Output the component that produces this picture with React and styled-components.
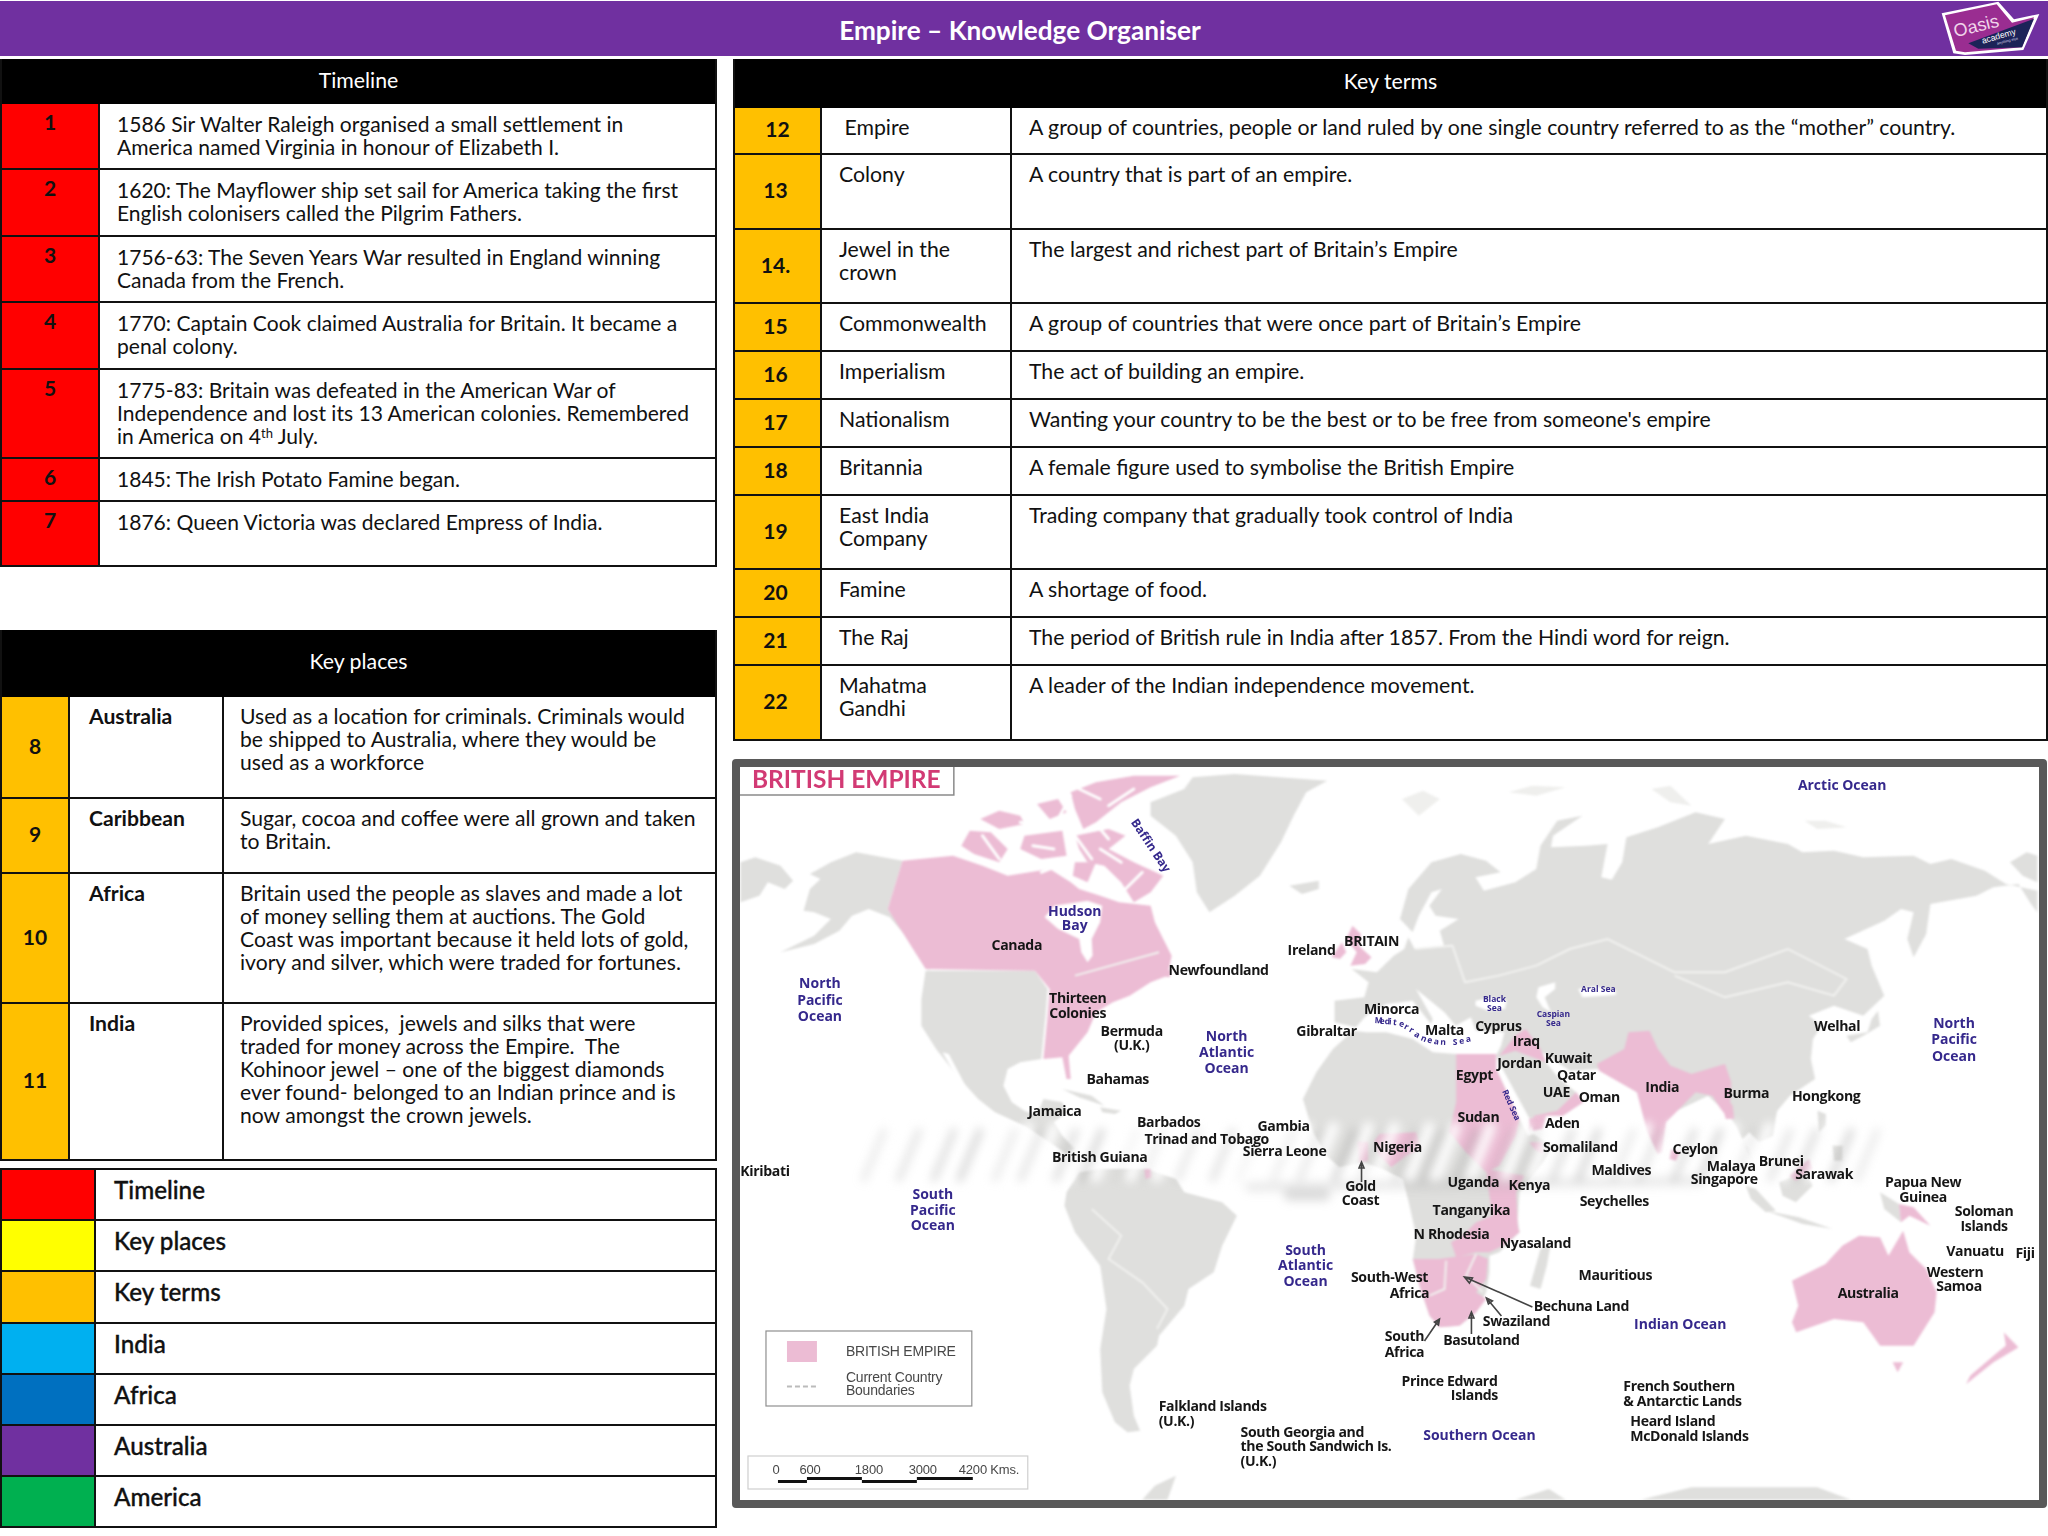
import React from 'react';
import styled, { createGlobalStyle } from 'styled-components';

const Global = createGlobalStyle`
  html, body { margin: 0; padding: 0; background: #fff; }
  body { font-family: Lato, "Noto Sans", sans-serif; color: #111; width: 2048px; height: 1536px; overflow: hidden; }
  * { box-sizing: border-box; }
`;

const Page = styled.div`
  width: 2048px;
  padding-top: 1px;
`;
const TitleBar = styled.header`
  position: relative;
  height: 55px;
  background: #7030a0;
  color: #fff;
  display: flex;
  align-items: center;
  justify-content: center;
  padding: 3px 8px 0 0;
`;
const Title = styled.h1`
  margin: 0;
  font-size: 26.2px;
  font-weight: 700;
`;
const LogoMark = styled.svg`
  position: absolute;
  left: 1940px;
  top: -1px;
  width: 100px;
  height: 57px;
`;
const Columns = styled.main`
  display: grid;
  grid-template-columns: 717px 1315px;
  column-gap: 16px;
  padding-top: 3px;
`;
const Stack = styled.div`
  display: flex;
  flex-direction: column;
`;
const Table = styled.section`
  border-left: 2px solid #111;
  border-right: 2px solid #111;
  margin-bottom: ${p => p.$bottom || 0}px;
`;
const TableHead = styled.div`
  height: ${p => p.$h}px;
  background: #000;
  color: #fff;
  font-size: 21.3px;
  display: flex;
  align-items: center;
  justify-content: center;
  padding-bottom: ${p => p.$shift || 0}px;
`;
const Row = styled.div`
  display: grid;
  grid-template-columns: ${p => p.$cols};
  height: ${p => p.$h}px;
  border-bottom: 2px solid #111;
`;
const Num = styled.div`
  background: ${p => p.$bg};
  font-weight: 700;
  font-size: 21px;
  line-height: 23px;
  display: flex;
  justify-content: center;
  align-items: ${p => (p.$top ? 'flex-start' : 'center')};
  padding-top: ${p => (p.$top ? 6 : 0)}px;
  padding-bottom: ${p => (p.$top ? 0 : 4)}px;
  padding-right: ${p => p.$pr || 0}px;
`;
const Cell = styled.div`
  border-left: 2px solid #111;
  padding: 8px 0 0 ${p => p.$pl ?? 17}px;
  font-size: ${p => p.$fs}px;
  line-height: 23px;
  font-weight: ${p => (p.$bold ? 700 : 400)};
  white-space: pre-wrap;
  sup { font-size: 13px; line-height: 0; vertical-align: 6px; }
`;
const LegendTable = styled(Table)`
  border-top: 2px solid #111;
`;
const LegendSwatch = styled.div`
  background: ${p => p.$bg};
`;
const LegendName = styled.div`
  border-left: 2px solid #111;
  padding: 5px 0 0 18px;
  font-size: 24.2px;
  line-height: 29px;
  font-weight: 500;
  -webkit-text-stroke: 0.35px #111;
`;
const MapFrame = styled.figure`
  margin: 18px 1px 0 -1px;
  height: 749px;
  border: 8px solid #595959;
  border-radius: 4px;
  background: #fff;
  overflow: hidden;
`;
const MapSvg = styled.svg`
  display: block;
  width: 100%;
  height: 100%;
`;
const LandLayer = styled.g`
  filter: blur(0.9px);
`;
const HazeLayer = styled.g`
  filter: blur(5px);
`;
const LabelLayer = styled.g`
  filter: blur(0.35px);
`;
const Shape = styled.path`
  fill: ${p => ({ land: '#dfdfdd', faint: '#efefed', brit: '#ecbcd4', sea: '#ffffff' }[p.$kind])};
`;
const Border = styled.path`
  fill: none;
  stroke: #f2f2f0;
  stroke-width: 2;
  vector-effect: non-scaling-stroke;
`;
const Channel = styled.path`
  fill: none;
  stroke: #fff;
  stroke-width: 3;
  stroke-linecap: round;
  vector-effect: non-scaling-stroke;
`;
const Smear = styled.line`
  stroke: ${p => p.$c};
  stroke-width: ${p => p.$w};
  stroke-linecap: round;
  opacity: ${p => p.$o};
`;
const Leader = styled.path`
  fill: none;
  stroke: #444;
  stroke-width: 1.6;
`;
const BoundaryKey = styled.path`
  fill: none;
  stroke: #bbb;
  stroke-width: 2;
  stroke-dasharray: 5 3;
`;
const Label = styled.text`
  font-family: "Open Sans", "Noto Sans", sans-serif;
  font-weight: 700;
  font-size: ${p => ({ place: 14.1, sea: 14, bay: 12, tiny: 8.5 }[p.$kind])}px;
  fill: ${p => (p.$kind === 'place' ? '#161616' : '#35288c')};
  text-anchor: ${p => p.$anchor || 'middle'};
  letter-spacing: ${p => (p.$kind === 'place' ? -0.35 : 0)}px;
`;
const MapTitleBox = styled.rect`
  fill: #fff;
  stroke: #8a8a8a;
  stroke-width: 1.5;
`;
const MapTitle = styled.text`
  font-family: Lato, sans-serif;
  font-weight: 700;
  font-size: 24.5px;
  fill: #d23a74;
`;
const InsetBox = styled.rect`
  fill: #fff;
  stroke: ${p => p.$c};
  stroke-width: 1.2;
`;
const InsetText = styled.text`
  font-family: "Liberation Sans", Arial, sans-serif;
  font-size: ${p => p.$s || 14}px;
  fill: #484848;
  text-anchor: ${p => p.$anchor || 'start'};
  letter-spacing: -0.2px;
`;
const LogoText = styled.text`
  font-family: "Liberation Sans", Arial, sans-serif;
  fill: ${p => p.$c};
  font-size: ${p => p.$s}px;
`;

const TIMELINE = [
  [1, 66, <>1586 Sir Walter Raleigh organised a small settlement in{'\n'}America named Virginia in honour of Elizabeth I.</>],
  [2, 67, <>1620: The Mayflower ship set sail for America taking the first{'\n'}English colonisers called the Pilgrim Fathers.</>],
  [3, 66, <>1756-63: The Seven Years War resulted in England winning{'\n'}Canada from the French.</>],
  [4, 67, <>1770: Captain Cook claimed Australia for Britain. It became a{'\n'}penal colony.</>],
  [5, 89, <>1775-83: Britain was defeated in the American War of{'\n'}Independence and lost its 13 American colonies. Remembered{'\n'}in America on 4<sup>th</sup> July.</>],
  [6, 43, <>1845: The Irish Potato Famine began.</>],
  [7, 65, <>1876: Queen Victoria was declared Empress of India.</>],
];
const PLACES = [
  [8, 102, 'Australia', 'Used as a location for criminals. Criminals would\nbe shipped to Australia, where they would be\nused as a workforce'],
  [9, 75, 'Caribbean', 'Sugar, cocoa and coffee were all grown and taken\nto Britain.'],
  [10, 130, 'Africa', 'Britain used the people as slaves and made a lot\nof money selling them at auctions. The Gold\nCoast was important because it held lots of gold,\nivory and silver, which were traded for fortunes.'],
  [11, 157, 'India', 'Provided spices,  jewels and silks that were\ntraded for money across the Empire.  The\nKohinoor jewel – one of the biggest diamonds\never found- belonged to an Indian prince and is\nnow amongst the crown jewels.'],
];
const LEGEND = [
  ['#ff0000', 'Timeline'], ['#ffff00', 'Key places'], ['#ffc000', 'Key terms'], ['#00b0f0', 'India'],
  ['#0070c0', 'Africa'], ['#7030a0', 'Australia'], ['#00b050', 'America'],
];
const TERMS = [
  ['12', 47, '\u00A0Empire', 'A group of countries, people or land ruled by one single country referred to as the “mother” country.'],
  ['13', 75, 'Colony', 'A country that is part of an empire.'],
  ['14.', 74, 'Jewel in the\ncrown', 'The largest and richest part of Britain’s Empire'],
  ['15', 48, 'Commonwealth', 'A group of countries that were once part of Britain’s Empire'],
  ['16', 48, 'Imperialism', 'The act of building an empire.'],
  ['17', 48, 'Nationalism', "Wanting your country to be the best or to be free from someone's empire"],
  ['18', 48, 'Britannia', 'A female figure used to symbolise the British Empire'],
  ['19', 74, 'East India\nCompany', 'Trading company that gradually took control of India'],
  ['20', 48, 'Famine', 'A shortage of food.'],
  ['21', 48, 'The Raj', 'The period of British rule in India after 1857. From the Hindi word for reign.'],
  ['22', 75, 'Mahatma\nGandhi', 'A leader of the Indian independence movement.'],
];

const FRAMES = {
  z3: 'translate(730 750) scale(.4209 .3333)',
  z4: 'translate(1390 750) scale(.4196 .3333)',
  z5: 'translate(730 1150) scale(.4209 .3333)',
  z6: 'translate(1390 1150) scale(.4196 .3333)',
  z8: 'translate(1200 960) scale(.3333)',
  z9: 'translate(1600 1040) scale(.3333)',
};
const poly = s => 'M' + s.trim().split(/\s+/).join('L') + 'Z';
const SHAPES = [
  // faint arctic islands
  ['z4', 'faint', '30,150 80,125 120,150 70,200'],
  ['z4', 'faint', '285,130 340,110 420,115 350,140'],
  ['z4', 'faint', '625,120 670,110 720,170 670,160'],
  ['z4', 'faint', '990,215 1040,215 1090,235 1020,240'],
  // land
  ['z3', 'land', '25,340 60,325 120,350 150,395 130,420 90,400 70,440 25,460'],
  ['z3', 'land', '175,485 190,420 215,390 190,375 240,340 300,310 345,320 410,335 375,480 420,560 470,650 480,680 455,620 410,550 380,505 330,480 290,500 260,545 200,585 120,610 200,560 240,510 200,490'],
  ['z3', 'land', '465,665 725,665 755,720 750,800 740,930 690,940 660,960 650,1010 670,1060 700,1085 730,1100 745,1050 790,1060 800,1090 770,1120 790,1160 820,1200 800,1215 760,1180 700,1130 630,1090 590,1050 540,980 490,900 455,830 455,750'],
  ['z3', 'land', '790,1020 860,1040 890,1070 830,1045'],
  ['z3', 'land', '880,1075 930,1085 915,1095 885,1090'],
  ['z3', 'land', '1000,160 1080,120 1100,85 1200,75 1420,95 1370,130 1340,200 1310,280 1260,380 1200,440 1140,490 1110,430 1100,340 1060,260 1000,200'],
  ['z3', 'land', '1330,410 1400,395 1400,420 1360,435'],
  ['z4', 'land', '-131,755 -60,745 -50,700 -90,660 -30,670 10,620 35,600 45,565 60,600 130,590 120,545 165,510 110,500 95,470 125,420 100,430 70,500 55,550 25,510 45,420 100,340 170,315 230,335 265,370 205,385 225,425 300,400 350,360 360,290 400,215 460,200 390,260 385,295 470,290 520,285 505,385 530,392 555,340 565,265 640,235 730,190 800,210 760,285 850,260 950,285 985,310 1060,305 1130,325 1250,320 1290,345 1340,330 1420,365 1470,405 1545,425 1545,490 1530,465 1500,405 1440,415 1400,440 1290,465 1280,555 1250,625 1235,570 1250,490 1220,480 1180,515 1085,570 1140,600 1150,650 1180,740 1130,800 1060,770 1000,800 1030,830 1010,870 1005,930 1015,990 955,1040 925,1085 922,1100 914,1160 882,1180 858,1150 842,1170 874,1260 854,1200 826,1130 810,1100 760,1040 660,1100 640,1100 590,1030 500,960 430,965 365,910 373,940 405,990 445,1030 460,1060 413,1100 373,1100 333,1110 345,1135 272,965 254,920 266,890 274,850 206,845 194,805 158,830 131,790 63,720 103,810 99,825 55,755 -8,765 -56,800 -80,835 -131,820'],
  ['z4', 'land', '1480,340 1520,310 1545,320 1545,400 1510,380'],
  ['z4', 'land', '1165,785 1170,830 1130,860 1100,880 1090,860 1140,850 1150,810'],
  ['z4', 'land', '1120,640 1135,650 1145,700 1130,690'],
  ['z8', 'land', '460,215 500,220 560,220 640,240 700,280 770,285 890,285 890,330 965,490 985,530 1000,525 1060,560 1030,610 960,700 955,780 960,820 900,880 870,890 870,940 860,1000 830,1060 780,1100 720,1105 690,1070 660,980 640,900 650,830 630,740 610,660 550,630 490,610 420,625 380,590 340,520 310,420 350,340 400,270'],
  ['z6', 'land', '360,300 385,280 375,350 360,420 335,410'],
  ['z5', 'land', '800,130 830,70 880,60 990,60 1060,90 1080,130 1170,160 1205,200 1170,290 1150,370 1090,420 1080,470 1020,560 1015,590 960,660 950,710 960,800 975,845 945,850 915,820 885,730 880,600 895,480 880,350 820,250 795,170'],
  ['z5', 'land', '980,1052 1010,1010 1060,980 1040,1052'],
  ['z6', 'land', '300,1052 380,1020 420,1052'],
  ['z6', 'land', '600,1052 720,1015 1020,1015 1100,1052'],
  ['z9', 'land', '655,215 680,225 680,260 660,280'],
  ['z9', 'land', '700,320 730,320 730,365 705,365'],
  ['z9', 'land', '540,430 620,395 640,440 590,490 550,470'],
  ['z9', 'land', '440,440 470,450 530,515 500,520 455,480'],
  ['z9', 'land', '500,515 600,535 700,570 610,555'],
  ['z6', 'land', '1170,130 1215,165 1220,220 1180,180'],
  // British Empire
  ['z3', 'brit', '410,335 375,480 465,660 725,665 760,720 755,800 745,930 790,925 800,990 810,990 805,920 850,850 870,790 910,760 950,740 1000,700 1040,680 1050,620 1010,520 1000,470 925,460 880,440 830,420 810,400 760,360 660,380 600,350 530,320'],
  ['z3', 'brit', '550,290 570,245 620,250 660,300 640,340 580,315'],
  ['z3', 'brit', '595,210 640,185 690,200 700,225 640,240'],
  ['z3', 'brit', '730,165 780,150 800,190 760,210'],
  ['z3', 'brit', '810,130 870,100 960,80 1070,80 1000,115 930,160 870,220 840,240 820,180'],
  ['z3', 'brit', '820,260 900,240 940,260 900,300 960,340 1030,380 1000,430 960,460 930,400 890,350 850,340 830,300'],
  ['z3', 'brit', '700,260 790,245 800,320 740,330 690,300'],
  ['z3', 'brit', '820,340 870,340 850,400 815,380'],
  ['z3', 'brit', '1480,530 1500,555 1495,590 1525,625 1510,645 1475,650 1490,610 1465,570'],
  ['z3', 'brit', '1430,625 1455,580 1465,610 1450,630'],
  ['z3', 'brit', '1020,680 1050,660 1045,685'],
  ['z4', 'brit', '495,945 560,900 570,850 620,845 640,900 670,950 720,975 760,960 800,945 815,1000 810,1110 790,1080 770,1040 730,1030 660,1120 650,1210 640,1215 615,1150 590,1030 500,965'],
  ['z4', 'brit', '262,920 300,860 325,840 360,900 373,940 300,905'],
  ['z4', 'brit', '445,1030 462,1060 413,1100 373,1100 333,1110 333,1150 345,1100 400,1085'],
  ['z8', 'brit', '770,285 890,285 890,330 960,480 950,530 900,620 860,640 800,580 750,520 770,430'],
  ['z8', 'brit', '990,480 1040,470 1030,510 1000,515'],
  ['z8', 'brit', '990,550 1030,550 1030,585 1005,570'],
  ['z8', 'brit', '540,525 650,520 665,570 620,590 575,625 540,590 525,545'],
  ['z8', 'brit', '475,548 505,548 505,605 478,610'],
  ['z8', 'brit', '860,630 975,650 950,700 955,800 960,820 910,860 830,790 880,770 870,710'],
  ['z8', 'brit', '830,790 910,860 870,880 830,880 770,895 755,850 790,830'],
  ['z8', 'brit', '640,900 720,900 830,885 865,900 860,960 830,1000 860,1020 830,1060 780,1100 720,1105 690,1070 660,980'],
  ['z5', 'brit', '985,60 1000,60 1002,85 988,90'],
  ['z6', 'brit', '960,395 1040,345 1080,290 1120,260 1170,265 1190,320 1225,245 1240,310 1280,360 1305,430 1300,490 1250,590 1170,590 1130,520 1060,510 970,550 960,520 975,470'],
  ['z6', 'brit', '1200,640 1225,640 1212,670'],
  ['z6', 'brit', '1465,550 1500,595 1440,640 1375,705 1385,680 1450,610 1470,590'],
  ['z6', 'brit', '1215,165 1250,175 1290,230 1240,200 1220,220'],
  ['z9', 'brit', '375,165 400,200 405,240 380,240 365,190'],
  ['z9', 'brit', '570,410 630,360 640,390 590,425'],
  ['z9', 'brit', '215,330 240,340 230,365 210,360'],
  // water
  ['z3', 'sea', '748,505 770,470 850,455 885,470 880,520 860,570 862,620 850,640 835,610 830,570 780,540'],
  ['z3', 'sea', '505,910 520,915 560,1010 545,1000'],
  ['z4', 'sea', '205,755 245,745 280,755 275,780 235,785 205,770'],
  ['z4', 'sea', '355,715 395,700 395,720 370,745 385,790 365,775 350,745'],
  ['z4', 'sea', '450,720 490,712 540,725 540,738 460,745'],
];
const BORDERS = [
  ['z4', 'M350,650 L430,600 520,570 600,620 680,670 800,670 950,600 1090,690 1060,740 950,700 800,745 680,680'],
  ['z4', 'M60,600 L150,590 180,700 260,680 350,650'],
  ['z5', 'M860,180 L930,260 900,330 980,400 1040,480 1015,540'],
  ['z8', 'M740,905 L735,990 690,1010'],
  ['z8', 'M830,885 L800,950 850,1000'],
  ['z3', 'M820,680 L1020,610'],
];
const CHANNELS = 'M600,260 L640,330 M690,220 L760,240 M820,200 L800,240 M880,150 L830,120 M900,270 L880,240 M930,340 L880,300 M820,260 L860,330 M780,210 L810,140 M960,120 L900,170 M720,290 L770,300 M740,370 L800,340 M980,370 L940,420';
const LABELS = [
  ['Canada', 1017, 951], ['Ireland', 1312, 956], ['BRITAIN', 1372, 947], ['Newfoundland', 1219, 976],
  ['Thirteen', 1078, 1004], ['Colonies', 1078, 1019], ['Bermuda', 1132, 1037], ['(U.K.)', 1132, 1051],
  ['Gibraltar', 1327, 1037], ['Bahamas', 1118, 1085], ['Jamaica', 1055, 1117], ['Barbados', 1169, 1128],
  ['Gambia', 1284, 1132], ['Trinad and Tobago', 1207, 1145], ['Sierra Leone', 1285, 1157], ['British Guiana', 1100, 1163],
  ['Kiribati', 765, 1177], ['Gold', 1361, 1192], ['Coast', 1361, 1206], ['Nigeria', 1398, 1153],
  ['Minorca', 1392, 1015], ['Malta', 1445, 1036], ['Cyprus', 1499, 1032], ['Iraq', 1527, 1047], ['Jordan', 1520, 1069],
  ['Kuwait', 1569, 1064], ['Qatar', 1577, 1081], ['Egypt', 1475, 1081], ['UAE', 1557, 1098], ['Oman', 1600, 1103],
  ['Sudan', 1479, 1123], ['Aden', 1563, 1129], ['Somaliland', 1581, 1153], ['Uganda', 1474, 1188], ['Kenya', 1530, 1191],
  ['Tanganyika', 1472, 1216], ['N Rhodesia', 1452, 1240], ['Nyasaland', 1536, 1249], ['South-West', 1390, 1283], ['Africa', 1410, 1299],
  ['Bechuna Land', 1582, 1312], ['Swaziland', 1517, 1327], ['South', 1405, 1342], ['Africa', 1405, 1358], ['Basutoland', 1482, 1346],
  ['Maldives', 1622, 1176], ['Seychelles', 1615, 1207], ['Mauritious', 1616, 1281], ['Prince Edward', 1450, 1387], ['Islands', 1475, 1401],
  ['India', 1663, 1093], ['Burma', 1747, 1099], ['Hongkong', 1827, 1102], ['Welhal', 1838, 1032], ['Ceylon', 1696, 1155],
  ['Malaya', 1732, 1172], ['Singapore', 1725, 1185], ['Brunei', 1782, 1167], ['Sarawak', 1825, 1180], ['Papua New', 1924, 1188], ['Guinea', 1924, 1203],
  ['Soloman', 1985, 1217], ['Islands', 1985, 1232], ['Vanuatu', 1976, 1257], ['Fiji', 2026, 1259], ['Western', 1956, 1278], ['Samoa', 1960, 1292], ['Australia', 1869, 1299],
  ['French Southern', 1624, 1392, 'place', 'start'], ['& Antarctic Lands', 1624, 1407, 'place', 'start'],
  ['Heard Island', 1631, 1427, 'place', 'start'], ['McDonald Islands', 1631, 1442, 'place', 'start'],
  ['Falkland Islands', 1159, 1412, 'place', 'start'], ['(U.K.)', 1159, 1427, 'place', 'start'],
  ['South Georgia and', 1241, 1438, 'place', 'start'], ['the South Sandwich Is.', 1241, 1452, 'place', 'start'], ['(U.K.)', 1241, 1467, 'place', 'start'],
  ['Hudson', 1075, 917, 'sea'], ['Bay', 1075, 931, 'sea'], ['North', 820, 989, 'sea'], ['Pacific', 820, 1006, 'sea'], ['Ocean', 820, 1022, 'sea'],
  ['North', 1227, 1042, 'sea'], ['Atlantic', 1227, 1058, 'sea'], ['Ocean', 1227, 1074, 'sea'],
  ['South', 933, 1200, 'sea'], ['Pacific', 933, 1216, 'sea'], ['Ocean', 933, 1231, 'sea'],
  ['South', 1306, 1256, 'sea'], ['Atlantic', 1306, 1271, 'sea'], ['Ocean', 1306, 1287, 'sea'],
  ['North', 1955, 1029, 'sea'], ['Pacific', 1955, 1045, 'sea'], ['Ocean', 1955, 1062, 'sea'],
  ['Arctic Ocean', 1843, 791, 'sea'], ['Indian Ocean', 1681, 1330, 'sea'], ['Southern Ocean', 1480, 1441, 'sea'],
  ['Black', 1495, 1003, 'tiny'], ['Sea', 1495, 1012, 'tiny'], ['Caspian', 1554, 1018, 'tiny'], ['Sea', 1554, 1027, 'tiny'], ['Aral Sea', 1599, 993, 'tiny'],
];
const SMEARS = Array.from({ length: 33 }, (_, i) => ({
  x: 884 + i * 31 + ((i * 13) % 9),
  w: 6 + ((i * 7) % 7),
  o: (884 + i * 31 > 1130 && 884 + i * 31 < 1320 ? 0.1 : 0.2) + ((i * 5) % 4) * 0.06,
}));
// glyph placement along the sea's curve: [x, y, rotation] in map pixels
const MED = [[525,192,4],[540,194,4],[555,195,5],[568,196,5],[580,197,8],[597,200,18],[612,208,28],[627,217,32],[642,230,32],[662,243,24],[682,250,14],[702,255,8],[722,257,2],[745,258,0],[760,258,0],[780,255,-6],[800,250,-10],[820,245,-12]]
  .map(([x, y, r]) => [(1200 + x / 3).toFixed(1), (960 + y / 3).toFixed(1), r]);

function WorldMap() {
  return (
    <MapSvg viewBox="740 768 1300 733" preserveAspectRatio="none">
      <LandLayer>
        {SHAPES.map(([f, kind, pts], i) => (
          <g key={i} transform={FRAMES[f]}><Shape $kind={kind} d={poly(pts)} /></g>
        ))}
        {BORDERS.map(([f, d], i) => (
          <g key={i} transform={FRAMES[f]}><Border d={d} /></g>
        ))}
        <g transform={FRAMES.z3}><Channel d={CHANNELS} /></g>
      </LandLayer>
      <HazeLayer>
        {SMEARS.map(({ x, w, o }) => (
          <g key={x}>
            <Smear $c="#8f8f8f" $w={w} $o={o} x1={x} y1={1132} x2={x - 20} y2={1180} />
            <Smear $c="#ffffff" $w={w + 5} $o={0.9} x1={x + 14} y1={1128} x2={x - 6} y2={1178} />
          </g>
        ))}
        <Smear $c="#9a9a9a" $w={10} $o={0.2} x1={1250} y1={1188} x2={1700} y2={1182} />
        <Smear $c="#8f8f8f" $w={12} $o={0.3} x1={1290} y1={1196} x2={1325} y2={1196} />
      </HazeLayer>
      <LabelLayer>
        <MapTitleBox x={738} y={766} width={216} height={30} />
        <MapTitle x={752} y={789}>BRITISH EMPIRE</MapTitle>
        <Leader d="M1533 1308 L1465 1278 M1465 1278 l8 1 l-3 5 Z M1502 1317 L1487 1299 M1487 1299 l6 3 l-4 3 Z M1472 1335 L1472 1313 M1472 1313 l2.5 6 h-5 Z M1425 1342 L1440 1320 M1440 1320 l-1 6 l-4 -3 Z M1362 1183 L1362 1163 M1362 1163 l2.5 6 h-5 Z" />
        {LABELS.map(([t, x, y, kind = 'place', anchor], i) => (
          <Label key={i} x={x} y={y} $kind={kind} $anchor={anchor}>{t}</Label>
        ))}
        <Label x={1152} y={851} $kind="bay" transform="rotate(56 1152 846)">Baffin Bay</Label>
        <Label x={1512} y={1109} $kind="tiny" transform="rotate(66 1512 1106)">Red Sea</Label>
        <Label
          $kind="tiny"
          $anchor="start"
          x={MED.map(m => m[0]).join(' ')}
          y={MED.map(m => m[1]).join(' ')}
          rotate={MED.map(m => m[2]).join(' ')}
        >
          Mediterranean Sea
        </Label>
        <InsetBox $c="#8f8f8f" x={766} y={1332} width={206} height={75} />
        <Shape $kind="brit" d="M787 1342h30v21h-30z" />
        <InsetText x={846} y={1357}>BRITISH EMPIRE</InsetText>
        <InsetText x={846} y={1383}>Current Country</InsetText>
        <InsetText x={846} y={1396}>Boundaries</InsetText>
        <BoundaryKey d="M787 1387.5h30" />
        <InsetBox $c="#cfcfcf" x={748} y={1457} width={280} height={33} />
        <InsetText $s={13} x={776} y={1475} $anchor="middle">0</InsetText>
        <InsetText $s={13} x={810} y={1475} $anchor="middle">600</InsetText>
        <InsetText $s={13} x={869} y={1475} $anchor="middle">1800</InsetText>
        <InsetText $s={13} x={923} y={1475} $anchor="middle">3000</InsetText>
        <InsetText $s={13} x={959} y={1475}>4200 Kms.</InsetText>
        <path d="M778 1481h29v3h-29zM807 1478h55v3h-55zM862 1481h55v3h-55zM917 1478h56v3h-56z" fill="#111" />
      </LabelLayer>
    </MapSvg>
  );
}

function Logo() {
  return (
    <LogoMark viewBox="270 0 300 171">
      <path d="M275 40 L445 5 L492 58 L568 42 L520 150 L345 165 L310 160 Z" fill="#fff" />
      <path d="M285 46 L440 13 L486 68 L552 52 L516 142 L345 157 L318 152 Z" fill="#9a2d91" />
      <path d="M355 130 L552 56 L516 142 L385 146 Z" fill="#1c2358" />
      <LogoText $c="#f0d4ea" $s={54} x={316} y={112} transform="rotate(-14 316 112)">Oasis</LogoText>
      <LogoText $c="#fff" $s={26} x={398} y={131} transform="rotate(-16 398 131)">academy</LogoText>
      <LogoText $c="#d8d8e8" $s={11} x={442} y={134} transform="rotate(-14 442 134)">anything else</LogoText>
    </LogoMark>
  );
}

export default function App() {
  return (
    <Page>
      <Global />
      <TitleBar>
        <Title>Empire – Knowledge Organiser</Title>
        <Logo />
      </TitleBar>
      <Columns>
        <Stack>
          <Table $bottom={63}>
            <TableHead $h={45} $shift={4}>Timeline</TableHead>
            {TIMELINE.map(([n, h, text]) => (
              <Row key={n} $cols="96px 1fr" $h={h}>
                <Num $bg="#ff0000" $top>{n}</Num>
                <Cell $fs={21.05}>{text}</Cell>
              </Row>
            ))}
          </Table>
          <Table $bottom={7}>
            <TableHead $h={67} $shift={6}>Key places</TableHead>
            {PLACES.map(([n, h, name, text]) => (
              <Row key={n} $cols="66px 154px 1fr" $h={h}>
                <Num $bg="#ffc000">{n}</Num>
                <Cell $fs={21.15} $bold $pl={19}>{name}</Cell>
                <Cell $fs={21.15} $pl={16}>{text}</Cell>
              </Row>
            ))}
          </Table>
          <LegendTable>
            {LEGEND.map(([c, name]) => (
              <Row key={name} $cols="92px 1fr" $h={51.2}>
                <LegendSwatch $bg={c} />
                <LegendName>{name}</LegendName>
              </Row>
            ))}
          </LegendTable>
        </Stack>
        <Stack>
          <Table>
            <TableHead $h={49} $shift={6}>Key terms</TableHead>
            {TERMS.map(([n, h, term, text]) => (
              <Row key={n} $cols="85px 190px 1fr" $h={h}>
                <Num $bg="#ffc000" $pr={n === '12' ? 0 : 4}>{n}</Num>
                <Cell $fs={21.25}>{term}</Cell>
                <Cell $fs={21.25}>{text}</Cell>
              </Row>
            ))}
          </Table>
          <MapFrame><WorldMap /></MapFrame>
        </Stack>
      </Columns>
    </Page>
  );
}
